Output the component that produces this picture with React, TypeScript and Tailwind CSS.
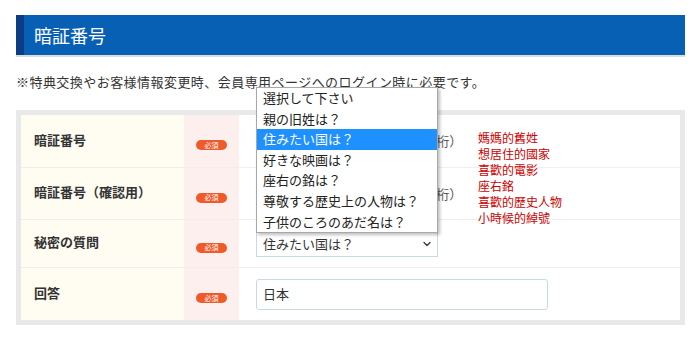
import { ChevronDown } from 'lucide-react'

const jp = { fontFamily: '"Noto Sans CJK JP", "Liberation Sans", sans-serif' }
const tc = { fontFamily: '"Noto Sans CJK TC", "Liberation Sans", sans-serif' }

const options = [
  '選択して下さい',
  '親の旧姓は？',
  '住みたい国は？',
  '好きな映画は？',
  '座右の銘は？',
  '尊敬する歴史上の人物は？',
  '子供のころのあだ名は？',
]

const notes = ['媽媽的舊姓', '想居住的國家', '喜歡的電影', '座右銘', '喜歡的歷史人物', '小時候的綽號']

function Badge() {
  return (
    <span className="mt-[8px] flex h-[10px] w-[31px] items-center justify-center rounded-full bg-[#ee5a2a] text-[7px] leading-none text-white">
      必須
    </span>
  )
}

function Row({ label, h, last, children }: { label: string; h: string; last?: boolean; children: React.ReactNode }) {
  return (
    <div className={`grid grid-cols-[163px_55px_1fr] ${h} ${last ? '' : 'border-b border-[#efefef]'}`}>
      <div className="flex items-center bg-[#fffcf2] pb-[3px] pl-[13px] text-[13px] font-bold text-[#333]">{label}</div>
      <div className="flex items-center justify-center bg-[#fdefee]">
        <Badge />
      </div>
      <div className="flex items-center bg-white pl-[17px]">{children}</div>
    </div>
  )
}

export default function App() {
  return (
    <div className="relative h-[338px] w-[700px] overflow-hidden bg-white" style={jp}>
      {/* header */}
      <div className="mx-[16px] mt-[15px] w-[669px] shadow-[0_2px_0_#dcdcdc]">
        <div className="flex h-[40px] items-center border-l-[8px] border-[#0b3d84] bg-[#0860b4] pl-[10px] text-[18px] text-white">
          暗証番号
        </div>
      </div>

      <p className="ml-[16px] mt-[18px] text-[13px] leading-[18px] tracking-[0.45px] text-[#333]">
        ※特典交換やお客様情報変更時、会員専用ページへのログイン時に必要です。
      </p>

      {/* form table */}
      <div className="ml-[16px] mt-[19px] w-[669px] bg-[#e9e9e9] p-[5px]">
        <Row label="暗証番号" h="h-[53px]">
          <div className="h-[28px] w-[100px] rounded-[3px] border border-[#c9d9e3]" />
          <span className="ml-[8px] text-[13px] text-[#555]">（半角数字4桁）</span>
        </Row>
        <Row label="暗証番号（確認用）" h="h-[52px]">
          <div className="h-[28px] w-[100px] rounded-[3px] border border-[#c9d9e3]" />
          <span className="ml-[8px] text-[13px] text-[#555]">（半角数字4桁）</span>
        </Row>
        <Row label="秘密の質問" h="h-[48px]">
          <div className="flex h-[26px] w-[182px] items-center justify-between border border-[#c9d9e3] pl-[6px] pr-[4px] text-[13px] text-[#333]">
            <span>住みたい国は？</span>
            <ChevronDown size={12} strokeWidth={2.5} className="text-[#333]" />
          </div>
        </Row>
        <Row label="回答" h="h-[52px]" last>
          <div className="flex h-[31px] w-[292px] items-center rounded-[3px] border border-[#c9d9e3] pl-[6px] text-[13px] text-[#333]">
            日本
          </div>
        </Row>
      </div>

      {/* open select list */}
      <div className="absolute left-[256px] top-[87px] w-[182px] border border-[#a8a8a8] bg-white shadow-[2px_2px_3px_rgba(0,0,0,0.25)]">
        {options.map((o, i) => (
          <div
            key={o}
            className={`h-[20.6px] pl-[6px] text-[13px] leading-[20.6px] ${i === 2 ? 'bg-[#1e90ff] text-white' : 'text-[#222]'}`}
          >
            {o}
          </div>
        ))}
      </div>

      {/* red annotation */}
      <div className="absolute left-[478px] top-[130px] text-[12px] leading-[16px] text-[#cc0000] [text-shadow:0_0_2px_#fff,0_0_2px_#fff]" style={tc}>
        {notes.map(n => (
          <div key={n}>{n}</div>
        ))}
      </div>
    </div>
  )
}
